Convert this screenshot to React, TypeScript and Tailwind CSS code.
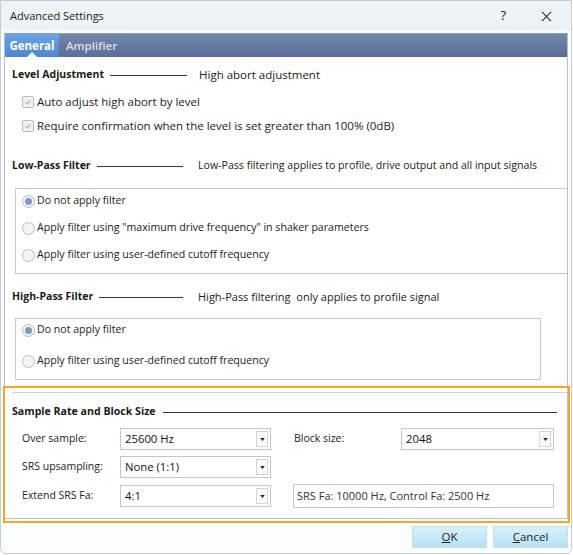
import type { ReactNode } from 'react';

const font = { fontFamily: '"Open Sans", "Noto Sans", sans-serif' };

function SectionHeader({ title, width, note, noteClass }: { title: string; width: string; note: string; noteClass: string }) {
  return (
    <div className="flex h-4 items-center">
      <div className={`flex items-center ${width}`}>
        <span className="text-[10.5px] font-bold text-[#1a1a1a]">{title}</span>
        <span className="ml-[6px] h-px flex-1 bg-[#333]" />
      </div>
      <span className={`whitespace-pre text-[#222] ${noteClass}`}>{note}</span>
    </div>
  );
}

function CheckRow({ label }: { label: string }) {
  return (
    <div className="flex h-5 items-center pl-[10px]">
      <span className="flex h-[12px] w-[12px] items-center justify-center rounded-[2px] border border-[#bdbdbd] bg-[#f0f0f0]">
        <svg viewBox="0 0 10 10" className="h-[8px] w-[8px]">
          <path d="M2 5.2 L4.2 7.4 L8 2.6" fill="none" stroke="#a3b3c6" strokeWidth="1.4" />
        </svg>
      </span>
      <span className="ml-[3px] text-[11.5px] text-[#222]">{label}</span>
    </div>
  );
}

function RadioRow({ label, checked }: { label: string; checked?: boolean }) {
  return (
    <div className="flex h-5 items-center">
      <span className="flex h-[13px] w-[13px] items-center justify-center rounded-full border border-[#bcbcbc] bg-[#f4f4f4]">
        {checked && <span className="h-[7px] w-[7px] rounded-full bg-[#7b9bc2]" />}
      </span>
      <span className="ml-[2px] text-[10.6px] text-[#222]">{label}</span>
    </div>
  );
}

function Box({ className, children }: { className: string; children: ReactNode }) {
  return <div className={`ml-[3px] border border-[#c9c9c9] pl-[6px] ${className}`}>{children}</div>;
}

function Select({ value, className }: { value: string; className: string }) {
  return (
    <div className={`flex h-[22px] items-center border border-[#c4c4c4] bg-white pl-[4px] pr-[2px] ${className}`}>
      <span className="flex-1 text-[11.3px] text-[#111]">{value}</span>
      <span className="flex h-[16px] w-[12px] items-center justify-center border border-[#d4d4d4] bg-[#fafafa]">
        <svg viewBox="0 0 6 4" className="h-[3px] w-[5px]">
          <path d="M0 0 H6 L3 4 Z" fill="#222" />
        </svg>
      </span>
    </div>
  );
}

function Label({ text, className }: { text: string; className: string }) {
  return <span className={`whitespace-nowrap text-[10.5px] text-[#222] ${className}`}>{text}</span>;
}

export default function App() {
  return (
    <div className="relative h-[555px] w-[573px] bg-white" style={font}>
      <div className="flex h-[554px] w-[572px] flex-col rounded-b-[6px] border border-[#c6ccd4] bg-[#fcfdfe]">
        {/* title bar */}
        <div className="flex h-[30px] shrink-0 items-center bg-[#eef3f8] pl-[9px]">
          <span className="flex-1 text-[11px] text-[#1b1b1b]">Advanced Settings</span>
          <span className="mr-[35px] text-[13px] text-[#222]">?</span>
          <svg viewBox="0 0 12 12" className="mr-[19px] h-[11px] w-[11px]">
            <path d="M1 1 L11 11 M11 1 L1 11" stroke="#222" strokeWidth="1.1" />
          </svg>
        </div>

        <div className="mx-[3px] mt-[2px] flex flex-col border-x border-b border-[#b9c0c9]">
          {/* tabs */}
          <div className="flex h-[24px] items-stretch border-t border-[#8d9cba] bg-gradient-to-b from-[#7387ae] to-[#596d95]">
            <div className="relative flex w-[54px] items-center justify-center bg-gradient-to-b from-[#6aa3e6] to-[#4c87d3] text-[11.5px] font-bold text-white">
              General
              <span className="absolute bottom-0 left-1/2 h-0 w-0 -translate-x-1/2 border-x-[5px] border-b-[5px] border-x-transparent border-b-white" />
            </div>
            <div className="flex items-center pl-[7px] text-[11.5px] font-semibold text-[#d9dfea]">Amplifier</div>
          </div>

          {/* content */}
          <div className="flex flex-col bg-white pl-[7px] pt-[10px]">
            <SectionHeader title="Level Adjustment" width="w-[175px]" note="High abort adjustment" noteClass="ml-[12px] text-[11.5px]" />
            <div className="mt-[9px]" />
            <CheckRow label="Auto adjust high abort by level" />
            <div className="mt-[4px]" />
            <CheckRow label="Require confirmation when the level is set greater than 100% (0dB)" />

            <div className="mt-[22px]" />
            <SectionHeader title="Low-Pass Filter" width="w-[171px]" note="Low-Pass filtering applies to profile, drive output and all input signals" noteClass="ml-[15px] text-[10.6px]" />
            <Box className="mt-[14px] h-[86px] border-r-0 pt-[2px]">
              <RadioRow label="Do not apply filter" checked />
              <div className="mt-[7px]" />
              <RadioRow label={'Apply filter using "maximum drive frequency" in shaker parameters'} />
              <div className="mt-[7px]" />
              <RadioRow label="Apply filter using user-defined cutoff frequency" />
            </Box>

            <div className="mt-[15px]" />
            <SectionHeader title="High-Pass Filter" width="w-[171px]" note="High-Pass filtering  only applies to profile signal" noteClass="ml-[15px] text-[11px]" />
            <Box className="mr-[26px] mt-[13px] h-[62px] pt-[1px]">
              <RadioRow label="Do not apply filter" checked />
              <div className="mt-[11px]" />
              <RadioRow label="Apply filter using user-defined cutoff frequency" />
            </Box>

            {/* sample rate */}
            <div className="mt-[12px] flex flex-col border-t border-[#cdd3da] pb-[10px] pt-[11px]">
              <div className="flex h-4 items-center pr-[10px]">
                <span className="text-[10.6px] font-bold text-[#1a1a1a]">Sample Rate and Block Size</span>
                <span className="ml-[7px] h-px flex-1 bg-[#333]" />
              </div>
              <div className="mt-[8px] flex items-center">
                <Label text="Over sample:" className="w-[108px] pl-[10px]" />
                <Select value="25600 Hz" className="w-[151px]" />
                <Label text="Block size:" className="ml-[23px] w-[107px]" />
                <Select value="2048" className="w-[153px]" />
              </div>
              <div className="mt-[6px] flex items-center">
                <Label text="SRS upsampling:" className="w-[108px] pl-[10px]" />
                <Select value="None (1:1)" className="w-[151px]" />
              </div>
              <div className="mt-[6px] flex items-center">
                <Label text="Extend SRS Fa:" className="w-[108px] pl-[10px]" />
                <Select value="4:1" className="w-[151px]" />
                <div className="ml-[22px] flex h-[24px] w-[261px] items-center border border-[#c4c4c4] pl-[3px] text-[11px] text-[#333]">
                  SRS Fa: 10000 Hz, Control Fa: 2500 Hz
                </div>
              </div>
            </div>
          </div>
        </div>

        {/* buttons */}
        <div className="flex justify-end gap-[6px] pr-[3px] pt-[7px]">
          <button className="h-[22px] w-[75px] border border-[#c7dbe8] bg-gradient-to-b from-[#d7f0fb] to-[#b7e2f5] text-[11.5px] text-[#222]">
            <span className="underline">O</span>K
          </button>
          <button className="h-[22px] w-[75px] border border-[#c7dbe8] bg-gradient-to-b from-[#d7f0fb] to-[#b7e2f5] text-[11.5px] text-[#222]">
            <span className="underline">C</span>ancel
          </button>
        </div>
      </div>

      {/* highlight frame */}
      <div className="pointer-events-none absolute left-[3px] top-[386px] h-[137px] w-[567px] border-2 border-[#f2a91f]" />
    </div>
  );
}
